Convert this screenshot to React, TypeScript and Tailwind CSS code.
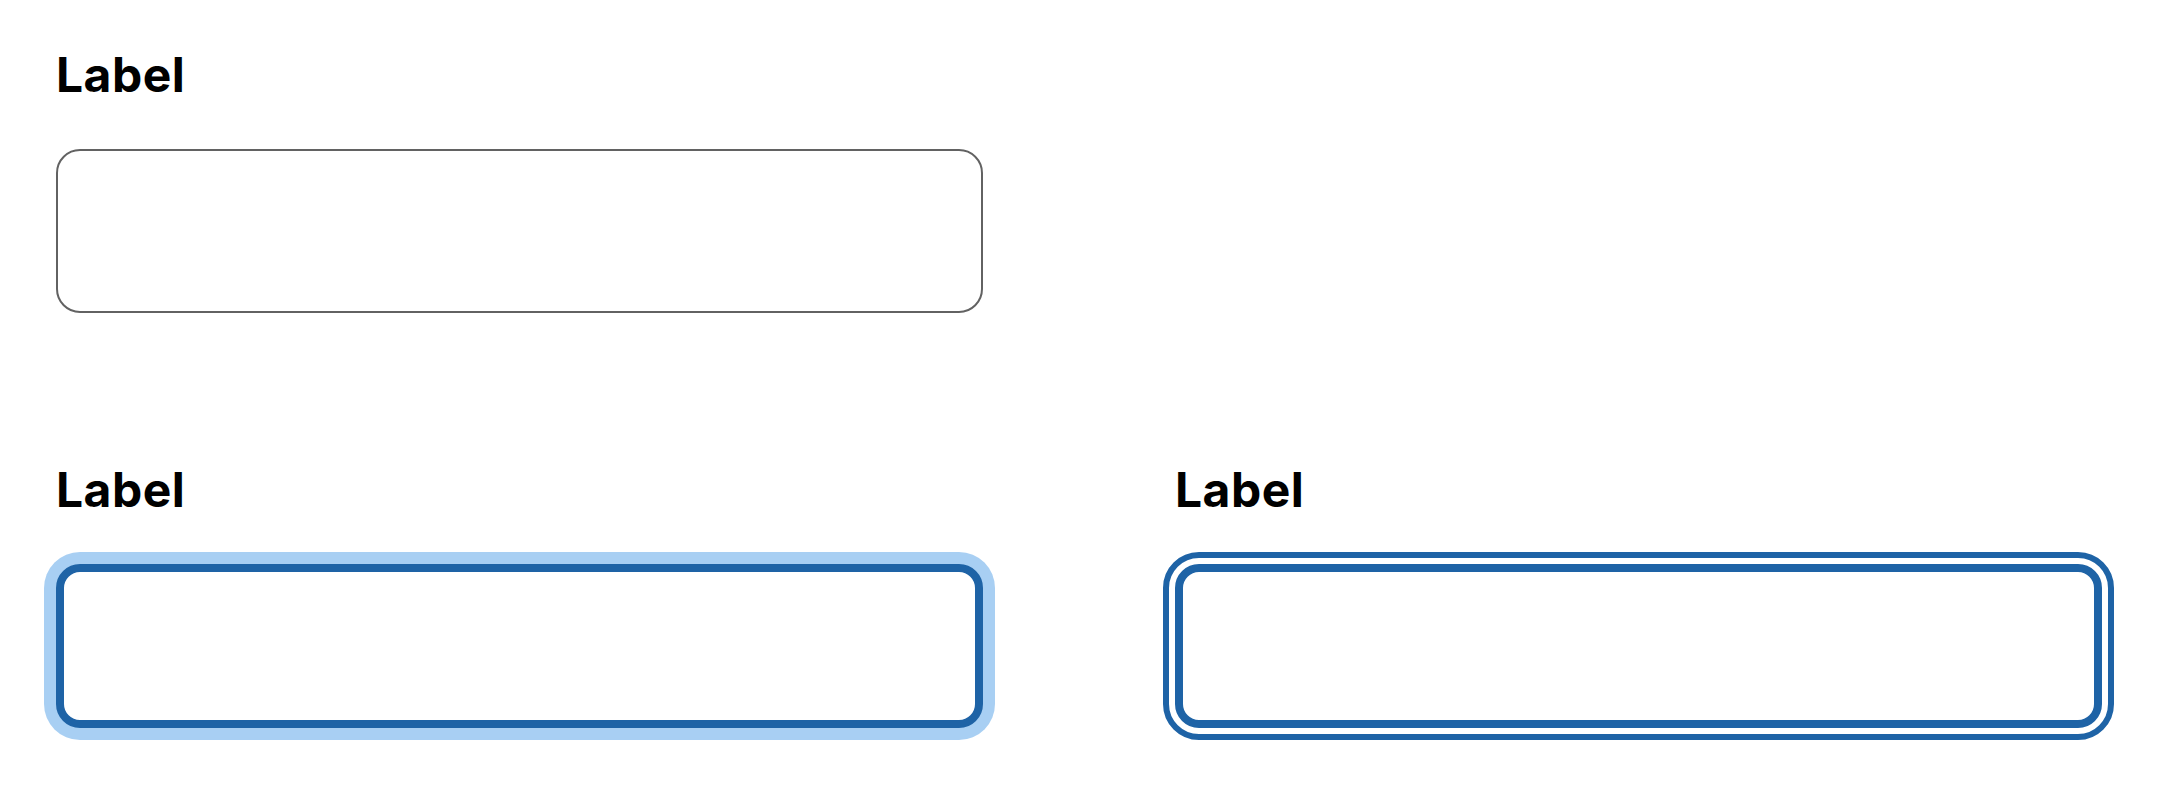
export default function App() {
  return (
    <div className="min-h-screen bg-white px-[56px] pt-[51px] font-['Inter',sans-serif] text-black">
      <div className="grid grid-cols-[927px_927px] gap-x-[192px] gap-y-[153px]">
        {/* Default */}
        <div className="flex flex-col gap-[50px]">
          <label className="text-[48px] font-bold leading-none tracking-[0.01em]">Label</label>
          <input
            type="text"
            aria-label="Label"
            className="h-[164px] w-full rounded-[24px] border-2 border-[#626262] bg-white outline-none"
          />
        </div>
        <div />

        {/* Focus ring */}
        <div className="flex flex-col gap-[50px]">
          <label className="text-[48px] font-bold leading-none tracking-[0.01em]">Label</label>
          <input
            type="text"
            aria-label="Label"
            className="h-[164px] w-full rounded-[24px] border-[8px] border-[#1e63a6] bg-white shadow-[0_0_0_12px_#a8cff3] outline-none"
          />
        </div>

        {/* Focus outline with offset */}
        <div className="flex flex-col gap-[50px]">
          <label className="text-[48px] font-bold leading-none tracking-[0.01em]">Label</label>
          <input
            type="text"
            aria-label="Label"
            className="h-[164px] w-full rounded-[24px] border-[8px] border-[#1e63a6] bg-white outline-[6px] outline-solid outline-[#1e63a6] outline-offset-[6px]"
          />
        </div>
      </div>
    </div>
  )
}
